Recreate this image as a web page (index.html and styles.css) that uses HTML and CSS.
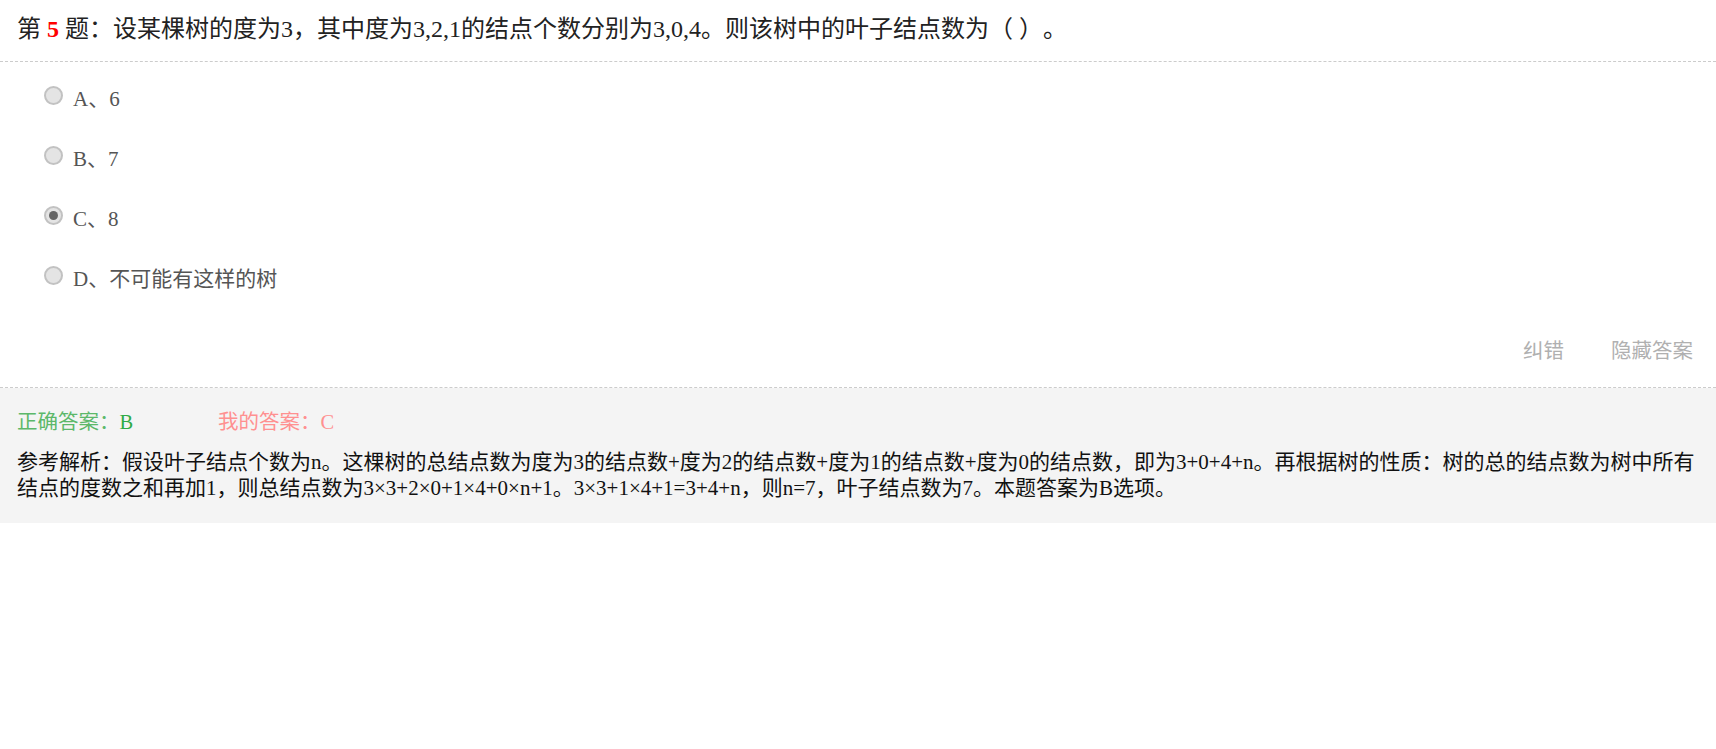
FILE: index.html
```html
<!DOCTYPE html>
<html lang="zh-CN">
<head>
<meta charset="utf-8">
<title>第5题</title>
<link rel="stylesheet" href="styles.css">
</head>
<body>
<div class="question">
  <div class="title">第 <span class="num">5</span> 题：设某棵树的度为3，其中度为3,2,1的结点个数分别为3,0,4。则该树中的叶子结点数为（ ）。</div>
  <ul class="options">
    <li class="opt"><span class="radio"></span><span class="label">A、6</span></li>
    <li class="opt"><span class="radio"></span><span class="label">B、7</span></li>
    <li class="opt"><span class="radio checked"></span><span class="label">C、8</span></li>
    <li class="opt"><span class="radio"></span><span class="label">D、不可能有这样的树</span></li>
  </ul>
  <div class="actions">
    <a class="action">纠错</a>
    <a class="action">隐藏答案</a>
  </div>
  <div class="answer">
    <div class="answer-row">
      <span class="right">正确答案：<b class="right-val">B</b></span>
      <span class="mine">我的答案：C</span>
    </div>
    <div class="analysis">参考解析：假设叶子结点个数为n。这棵树的总结点数为度为3的结点数+度为2的结点数+度为1的结点数+度为0的结点数，即为3+0+4+n。再根据树的性质：树的总的结点数为树中所有结点的度数之和再加1，则总结点数为3×3+2×0+1×4+0×n+1。3×3+1×4+1=3+4+n，则n=7，叶子结点数为7。本题答案为B选项。</div>
  </div>
</div>
</body>
</html>
```

FILE: styles.css
```css
html, body {
  margin: 0;
  padding: 0;
  background: #fff;
}

body {
  font-family: "Liberation Serif", "Noto Sans CJK SC", serif;
  color: #222;
  text-spacing-trim: space-all;
}

.title {
  font-size: 24px;
  line-height: 34px;
  padding: 12px 17px 15px;
  border-bottom: 1px dashed #cccccc;
  color: #222;
}

.num {
  color: #ff0000;
  font-weight: bold;
}

.options {
  list-style: none;
  margin: 0;
  padding: 5px 0 0 44px;
}

.opt {
  height: 60px;
  display: flex;
  align-items: center;
  font-size: 21px;
  color: #555;
}

.radio {
  width: 19px;
  height: 19px;
  box-sizing: border-box;
  border-radius: 50%;
  border: 2px solid #c2c2c2;
  background: #e4e4e4;
  margin-right: 10px;
  margin-bottom: 4px;
  display: flex;
  align-items: center;
  justify-content: center;
}

.radio.checked::after {
  content: "";
  width: 9px;
  height: 9px;
  border-radius: 50%;
  background: #666;
}

.actions {
  display: flex;
  justify-content: flex-end;
  gap: 47px;
  padding: 30px 23px 22px 0;
  line-height: 28px;
  font-size: 20.5px;
  border-bottom: 1px dashed #cccccc;
}

.action {
  color: #b0b0b0;
  cursor: pointer;
}

.answer {
  background: #f4f4f4;
  padding: 20px 11px 22px 17px;
}

.answer-row {
  font-size: 20.5px;
  line-height: 28px;
  display: flex;
}

.right {
  color: #5cb86a;
  width: 201px;
}

.right-val {
  font-weight: normal;
  color: #30ab45;
}

.mine {
  color: #ff9090;
}

.analysis {
  margin-top: 13px;
  font-size: 21px;
  line-height: 26px;
  color: #111;
}
```
